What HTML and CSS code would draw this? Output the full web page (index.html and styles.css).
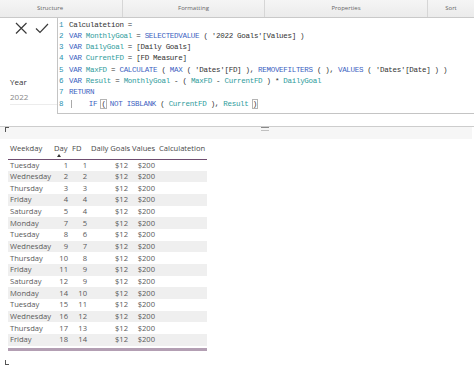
FILE: index.html
```html
<!DOCTYPE html>
<html lang="en">
<head>
    <meta charset="UTF-8">
    <meta name="viewport" content="width=device-width, initial-scale=1.0">
    <title>Calculatetion</title>
    <link rel="stylesheet" href="styles.css">
</head>
<body>
    <div class="ribbon">
        <div class="tab tab-structure">Structure</div>
        <div class="tab tab-formatting">Formatting</div>
        <div class="tab tab-properties">Properties</div>
        <div class="tab tab-sort">Sort</div>
    </div>

    <div class="formula">
        <div class="side">
            <div class="commit">
                <svg class="icon" width="14" height="14" viewBox="0 0 14 14">
                    <path d="M2 2 L12.5 12.5 M12.5 2 L2 12.5" stroke="#3a3a3a" stroke-width="1.2" fill="none"/>
                </svg>
                <svg class="icon" width="14" height="14" viewBox="0 0 14 14">
                    <path d="M1 7.5 L5 11.5 L13 3" stroke="#3a3a3a" stroke-width="1.2" fill="none"/>
                </svg>
            </div>
            <div class="slicer">
                <div class="slicer-title">Year</div>
                <div class="slicer-value">2022</div>
            </div>
        </div>
        <div class="editor">
            <div class="line"><span class="ln">1</span><span class="code">Calculatetion =</span></div>
            <div class="line"><span class="ln">2</span><span class="code"><span class="kw">VAR</span> <span class="var">MonthlyGoal</span> = <span class="fn">SELECTEDVALUE</span> ( '2022 Goals'[Values] )</span></div>
            <div class="line"><span class="ln">3</span><span class="code"><span class="kw">VAR</span> <span class="var">DailyGoal</span> = [Daily Goals]</span></div>
            <div class="line"><span class="ln">4</span><span class="code"><span class="kw">VAR</span> <span class="var">CurrentFD</span> = [FD Measure]</span></div>
            <div class="line"><span class="ln">5</span><span class="code"><span class="kw">VAR</span> <span class="var">MaxFD</span> = <span class="fn">CALCULATE</span> ( <span class="fn">MAX</span> ( 'Dates'[FD] ), <span class="fn">REMOVEFILTERS</span> ( ), <span class="fn">VALUES</span> ( 'Dates'[Date] ) )</span></div>
            <div class="line"><span class="ln">6</span><span class="code"><span class="kw">VAR</span> <span class="var">Result</span> = <span class="var">MonthlyGoal</span> - ( <span class="var">MaxFD</span> - <span class="var">CurrentFD</span> ) * <span class="var">DailyGoal</span></span></div>
            <div class="line"><span class="ln">7</span><span class="code"><span class="kw">RETURN</span></span></div>
            <div class="line"><span class="ln">8</span><span class="code"><span class="guide"> </span>   <span class="fn">IF</span> <span class="match">(</span> <span class="fn">NOT</span> <span class="fn">ISBLANK</span> ( <span class="var">CurrentFD</span> ), <span class="var">Result</span> <span class="match">)</span></span></div>
        </div>
    </div>

    <div class="gap"></div>
    <div class="band"><span class="grip"></span></div>

    <div class="visual">
        <span class="corner corner-top"></span>
        <table class="matrix">
            <thead>
                <tr>
                    <th>Weekday</th>
                    <th class="sorted">Day</th>
                    <th>FD</th>
                    <th>Daily Goals</th>
                    <th>Values</th>
                    <th>Calculatetion</th>
                </tr>
            </thead>
            <tbody>
                <tr><td>Tuesday</td><td class="num">1</td><td class="num">1</td><td class="num">$12</td><td class="num">$200</td><td></td></tr>
                <tr><td>Wednesday</td><td class="num">2</td><td class="num">2</td><td class="num">$12</td><td class="num">$200</td><td></td></tr>
                <tr><td>Thursday</td><td class="num">3</td><td class="num">3</td><td class="num">$12</td><td class="num">$200</td><td></td></tr>
                <tr><td>Friday</td><td class="num">4</td><td class="num">4</td><td class="num">$12</td><td class="num">$200</td><td></td></tr>
                <tr><td>Saturday</td><td class="num">5</td><td class="num">4</td><td class="num">$12</td><td class="num">$200</td><td></td></tr>
                <tr><td>Monday</td><td class="num">7</td><td class="num">5</td><td class="num">$12</td><td class="num">$200</td><td></td></tr>
                <tr><td>Tuesday</td><td class="num">8</td><td class="num">6</td><td class="num">$12</td><td class="num">$200</td><td></td></tr>
                <tr><td>Wednesday</td><td class="num">9</td><td class="num">7</td><td class="num">$12</td><td class="num">$200</td><td></td></tr>
                <tr><td>Thursday</td><td class="num">10</td><td class="num">8</td><td class="num">$12</td><td class="num">$200</td><td></td></tr>
                <tr><td>Friday</td><td class="num">11</td><td class="num">9</td><td class="num">$12</td><td class="num">$200</td><td></td></tr>
                <tr><td>Saturday</td><td class="num">12</td><td class="num">9</td><td class="num">$12</td><td class="num">$200</td><td></td></tr>
                <tr><td>Monday</td><td class="num">14</td><td class="num">10</td><td class="num">$12</td><td class="num">$200</td><td></td></tr>
                <tr><td>Tuesday</td><td class="num">15</td><td class="num">11</td><td class="num">$12</td><td class="num">$200</td><td></td></tr>
                <tr><td>Wednesday</td><td class="num">16</td><td class="num">12</td><td class="num">$12</td><td class="num">$200</td><td></td></tr>
                <tr><td>Thursday</td><td class="num">17</td><td class="num">13</td><td class="num">$12</td><td class="num">$200</td><td></td></tr>
                <tr><td>Friday</td><td class="num">18</td><td class="num">14</td><td class="num">$12</td><td class="num">$200</td><td></td></tr>
            </tbody>
        </table>
        <div class="total-bar"></div>
        <span class="corner corner-bottom"></span>
    </div>
</body>
</html>
```

FILE: styles.css
```css
:root {
    --ribbon-border: #c9c9c9;
    --ribbon-text: #666;
    --line: #cdcdcd;
    --band: #f6f6f6;
    --code: #333;
    --code-kw: #3c5fbf;
    --code-var: #2f9c9c;
    --code-ln: #2b91af;
    --cell: #5a5a5a;
    --head: #484848;
    --stripe: #efefef;
    --accent: #6f4d70;
    --accent-light: #b39fb3;
}

*,
*::before,
*::after {
    box-sizing: border-box;
    padding: 0;
    margin: 0;
}

body {
    width: 474px;
    height: 365px;
    overflow: hidden;
    background-color: #fff;
    font-family: 'Open Sans', sans-serif;
}

/* ribbon */
.ribbon {
    display: flex;
    height: 18px;
    background: linear-gradient(#f5f5f5, #ebebeb);
    border-bottom: 1px solid var(--ribbon-border);
}

.tab {
    display: flex;
    align-items: center;
    justify-content: center;
    padding-bottom: 2px;
    border-right: 1px solid #d6d6d6;
    color: var(--ribbon-text);
    font-size: 6px;
}

.tab-structure {
    width: 123px;
    padding-right: 22px;
}

.tab-formatting {
    width: 142px;
}

.tab-properties {
    width: 163px;
}

.tab-sort {
    flex: 1;
    border-right: none;
}

/* formula bar */
.formula {
    display: flex;
    height: 96px;
}

.side {
    width: 57px;
    display: flex;
    flex-direction: column;
}

.commit {
    display: flex;
    gap: 7px;
    padding: 3px 0 0 14px;
    height: 22px;
}

.slicer {
    padding: 36px 0 0 10px;
}

.slicer-title {
    color: #333;
    font-size: 8px;
    line-height: 11px;
}

.slicer-value {
    margin-top: 5px;
    padding-bottom: 2px;
    border-bottom: 1px solid #ececec;
    color: #888;
    font-size: 8px;
    line-height: 10px;
}

.editor {
    flex: 1;
    padding-top: 1.5px;
    border-left: 1px solid #c4c4c4;
    border-bottom: 1px solid #c4c4c4;
    font-family: 'Liberation Mono', monospace;
    font-size: 7.5px;
    letter-spacing: -0.3px;
    color: var(--code);
}

.line {
    display: flex;
    height: 11.3px;
    line-height: 11.3px;
    white-space: pre;
}

.ln {
    width: 10px;
    padding-left: 1px;
    color: var(--code-ln);
}

.code {
    padding-left: 1px;
}

.kw,
.fn {
    color: var(--code-kw);
}

.var {
    color: var(--code-var);
}

.guide {
    border-left: 1px solid #aaa;
    margin-left: 2px;
}

.match {
    border: 1px solid #b4b4b4;
    margin: 0 -1px;
}

/* canvas */
.gap {
    height: 13px;
    border-bottom: 1px solid var(--line);
}

.band {
    display: flex;
    justify-content: center;
    height: 12px;
    margin-right: 2px;
    background-color: var(--band);
}

.grip {
    width: 8px;
    height: 4px;
    margin-left: 58px;
    border-top: 1.5px solid #8a8a8a;
    border-bottom: 1px solid #c0c0c0;
}

.visual {
    position: relative;
    padding-left: 8px;
}

.corner {
    position: absolute;
    left: 5px;
    width: 4px;
    height: 5px;
    border-left: 1px solid #555;
}

.corner-top {
    top: -12px;
    border-top: 1px solid #555;
}

.corner-bottom {
    bottom: -14px;
    border-bottom: 1px solid #555;
}

.matrix {
    border-collapse: collapse;
    width: 199px;
    table-layout: fixed;
    font-size: 7.6px;
    color: var(--cell);
}

.matrix th {
    position: relative;
    height: 20px;
    padding: 0 2px 1px 2px;
    border-bottom: 1.5px solid var(--accent);
    color: var(--head);
    font-weight: normal;
    text-align: left;
    vertical-align: middle;
    white-space: nowrap;
}

.matrix th:nth-child(1) { width: 44px; }
.matrix th:nth-child(2) { width: 18px; }
.matrix th:nth-child(3) { width: 19px; }
.matrix th:nth-child(4) { width: 41px; }
.matrix th:nth-child(5) { width: 27px; }

.matrix th.sorted::after {
    content: '';
    position: absolute;
    left: 5px;
    bottom: 2px;
    border-left: 2px solid transparent;
    border-right: 2px solid transparent;
    border-bottom: 3px solid #333;
}

.matrix td {
    height: 11.67px;
    padding: 0 2px;
    line-height: 11px;
    white-space: nowrap;
}

.matrix td.num {
    text-align: right;
}

.matrix tbody tr:nth-child(even) td {
    background-color: var(--stripe);
}

.total-bar {
    width: 199px;
    height: 3px;
    margin-top: 2px;
    background-color: var(--accent-light);
}
```
